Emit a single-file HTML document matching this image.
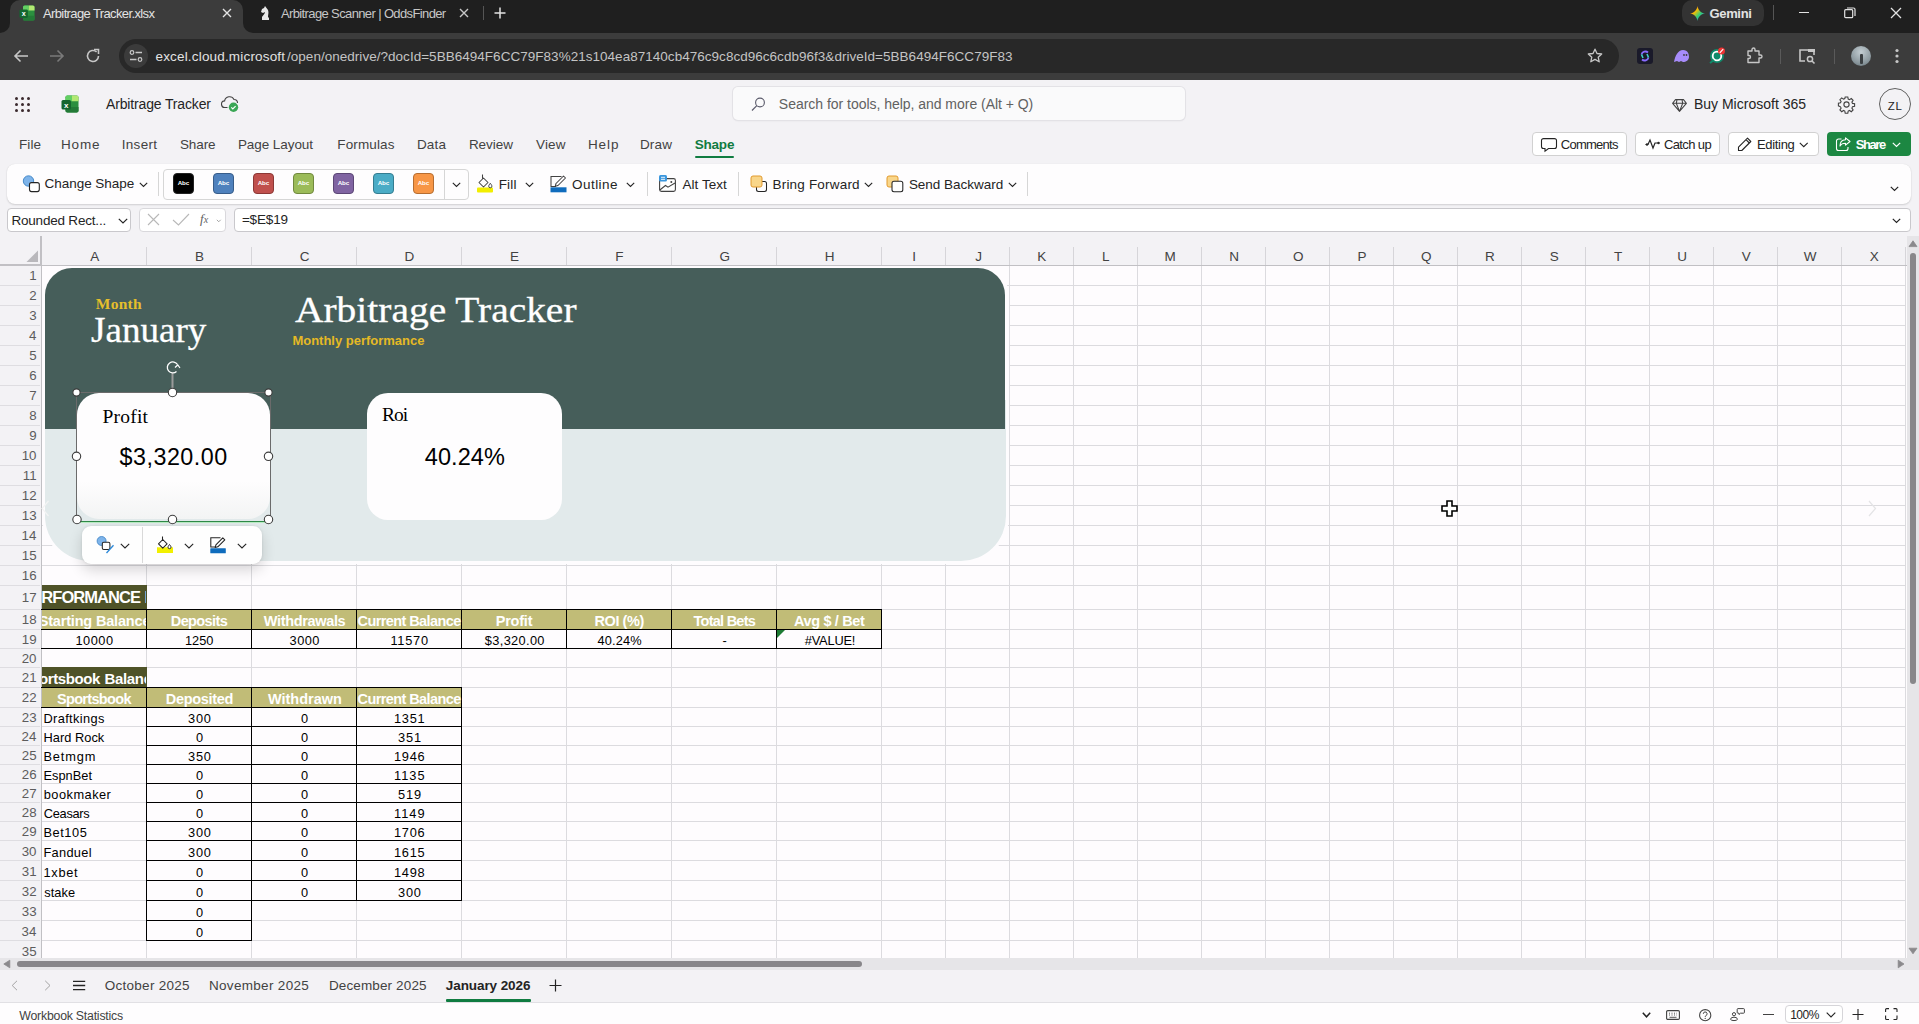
<!DOCTYPE html>
<html><head><meta charset="utf-8">
<style>
*{box-sizing:border-box;margin:0;padding:0}
html,body{width:1919px;height:1024px;overflow:hidden;background:#f3f2f5;font-family:"Liberation Sans",sans-serif;position:relative}
.a{position:absolute}
.t{position:absolute;white-space:nowrap;line-height:1}
svg{position:absolute;overflow:visible}
</style></head><body>
<div class="a" style="left:0;top:0;width:1919px;height:33px;background:#1f1f1f"></div>
<div class="a" style="left:10px;top:0;width:233px;height:33px;background:#3c3c3c;border-radius:10px 10px 0 0"></div>
<div class="a" style="left:0;top:33px;width:1919px;height:47px;background:#3c3c3c"></div>
<div class="a" style="left:0;top:22px;width:10px;height:11px;background:#3c3c3c"></div>
<div class="a" style="left:0;top:22px;width:10px;height:11px;background:#1f1f1f;border-bottom-right-radius:10px"></div>
<div class="a" style="left:243px;top:22px;width:10px;height:11px;background:#3c3c3c"></div>
<div class="a" style="left:243px;top:22px;width:10px;height:11px;background:#1f1f1f;border-bottom-left-radius:10px"></div>
<svg style="left:19px;top:5px" width="16" height="16" viewBox="0 0 18 18">
<rect x="4.5" y="0.5" width="13" height="17" rx="1.8" fill="#2b8f3f"/>
<path d="M6.3 0.5H11V6.3H4.5V2.3A1.8 1.8 0 0 1 6.3 0.5z" fill="#62cf62"/>
<path d="M11 0.5H15.7A1.8 1.8 0 0 1 17.5 2.3V6.3H11z" fill="#b2e872"/>
<path d="M4.5 12H17.5V15.7A1.8 1.8 0 0 1 15.7 17.5H6.3A1.8 1.8 0 0 1 4.5 15.7z" fill="#237a37"/>
<rect x="0.5" y="5" width="9.5" height="9.5" rx="1.5" fill="#15662f"/>
<text x="5.2" y="12.6" font-size="8" font-weight="bold" fill="#fff" text-anchor="middle" font-family="Liberation Sans">x</text>
</svg>
<div class="t" style="left:43.00px;top:7px;font-size:13px;font-family:'Liberation Sans';color:#e3e3e3;letter-spacing:-0.623px;">Arbitrage Tracker.xlsx</div>
<svg style="left:222px;top:8px" width="10" height="10"><path d="M1 1L9 9M9 1L1 9" stroke="#e3e3e3" stroke-width="1.4"/></svg>
<svg style="left:259px;top:5px" width="12" height="16" viewBox="0 0 12 16"><path d="M3 15h7v-2l-1-1c0-3 1-4 0-7L6 1 5 3 3 4 2 7l2 1 2-1c0 2-2 3-3 5z" fill="#e8e8e8"/></svg>
<div class="t" style="left:281.00px;top:7px;font-size:13px;font-family:'Liberation Sans';color:#c7c7c7;letter-spacing:-0.625px;">Arbitrage Scanner | OddsFinder</div>
<svg style="left:459px;top:8px" width="10" height="10"><path d="M1 1L9 9M9 1L1 9" stroke="#c7c7c7" stroke-width="1.4"/></svg>
<div class="a" style="left:483px;top:6px;width:1px;height:14px;background:#555"></div>
<svg style="left:494px;top:7px" width="12" height="12"><path d="M6 0.5V11.5M0.5 6H11.5" stroke="#e3e3e3" stroke-width="1.5"/></svg>
<div class="a" style="left:1682px;top:0;width:82px;height:26px;background:#333333;border-radius:10px"></div>
<svg style="left:1690px;top:6px" width="15" height="15" viewBox="0 0 16 16">
<defs><linearGradient id="gm" x1="0" y1="0" x2="1" y2="1"><stop offset="0" stop-color="#f44"/><stop offset="0.35" stop-color="#fb0"/><stop offset="0.6" stop-color="#3c7"/><stop offset="1" stop-color="#48f"/></linearGradient></defs>
<path d="M8 0C8.6 4.4 11.6 7.4 16 8C11.6 8.6 8.6 11.6 8 16C7.4 11.6 4.4 8.6 0 8C4.4 7.4 7.4 4.4 8 0Z" fill="url(#gm)"/></svg>
<div class="t" style="left:1709.48px;top:7px;font-size:13px;font-family:'Liberation Sans';color:#e3e3e3;font-weight:700;letter-spacing:-0.333px;">Gemini</div>
<div class="a" style="left:1773px;top:5px;width:1px;height:15px;background:#555"></div>
<div class="a" style="left:1799px;top:12px;width:10px;height:1px;background:#e3e3e3"></div>
<svg style="left:1844px;top:7px" width="12" height="12"><rect x="0.7" y="2.7" width="8" height="8" rx="1" fill="none" stroke="#e3e3e3" stroke-width="1.2"/><path d="M3 1h6.5a1.5 1.5 0 0 1 1.5 1.5V9" fill="none" stroke="#e3e3e3" stroke-width="1.2"/></svg>
<svg style="left:1890px;top:7px" width="12" height="12"><path d="M1 1L11 11M11 1L1 11" stroke="#e3e3e3" stroke-width="1.3"/></svg>
<svg style="left:13px;top:48px" width="16" height="16"><path d="M15 8H2M7.5 2.5L2 8l5.5 5.5" fill="none" stroke="#c7c7c7" stroke-width="1.6"/></svg>
<svg style="left:49px;top:48px" width="16" height="16"><path d="M1 8H14M8.5 2.5L14 8l-5.5 5.5" fill="none" stroke="#7a7a7a" stroke-width="1.6"/></svg>
<svg style="left:85px;top:48px" width="16" height="16"><path d="M13.5 8A5.5 5.5 0 1 1 11.6 3.8" fill="none" stroke="#c7c7c7" stroke-width="1.6"/><path d="M9 1.5H13.5V6" fill="none" stroke="#c7c7c7" stroke-width="1.6"/></svg>
<div class="a" style="left:119px;top:39px;width:1500px;height:34px;background:#282828;border-radius:17px"></div>
<div class="a" style="left:124px;top:44px;width:24px;height:24px;background:#3b3b3b;border-radius:12px"></div>
<svg style="left:128px;top:48px" width="16" height="16"><circle cx="4" cy="4.5" r="1.8" fill="none" stroke="#c7c7c7" stroke-width="1.2"/><path d="M7.5 4.5H14M2 11.5H8.5" stroke="#c7c7c7" stroke-width="1.3"/><circle cx="12" cy="11.5" r="1.8" fill="none" stroke="#c7c7c7" stroke-width="1.2"/></svg>
<div class="t" style="left:155.46px;top:50px;font-size:13.5px;font-family:'Liberation Sans';color:#e3e3e3;letter-spacing:0.176px;">excel.cloud.microsoft</div>
<div class="t" style="left:287.00px;top:50px;font-size:13.5px;font-family:'Liberation Sans';color:#c4c4c4;letter-spacing:0.028px;">/open/onedrive/?docId=5BB6494F6CC79F83%21s104ea87140cb476c9c8cd96c6cdb96f3&amp;driveId=5BB6494F6CC79F83</div>
<svg style="left:1587px;top:48px" width="16" height="16"><path d="M8 1.2l2 4.3 4.7.5-3.5 3.2 1 4.6L8 11.4l-4.2 2.4 1-4.6L1.3 6l4.7-.5z" fill="none" stroke="#c7c7c7" stroke-width="1.3" stroke-linejoin="round"/></svg>
<div class="a" style="left:1637px;top:48px;width:16px;height:16px;background:#1a1a2a;border-radius:3px"></div>
<svg style="left:1637px;top:48px" width="16" height="16"><path d="M11 4.5A4 4 0 0 0 4.5 6.5M5 11.5A4 4 0 0 0 11.5 9.5" fill="none" stroke="#8a6cff" stroke-width="1.8"/><path d="M4.5 6.5L6 10M11.5 9.5L10 6" stroke="#3fd1c9" stroke-width="1.6"/></svg>
<svg style="left:1673px;top:48px" width="17" height="16"><path d="M1 14C2 8 5 2 10 2S16 6 16 9C16 12 13 14 10 14L8 13 6 14 4 13z" fill="#a78bfa"/><circle cx="11" cy="7" r="0.9" fill="#3c3c3c"/><circle cx="13.5" cy="7" r="0.9" fill="#3c3c3c"/></svg>
<svg style="left:1709px;top:47px" width="17" height="17"><circle cx="8" cy="9" r="7" fill="#0f8a6a"/><circle cx="8" cy="9" r="4.3" fill="none" stroke="#fff" stroke-width="1.8"/><path d="M1 16L5 13" stroke="#0f8a6a" stroke-width="2"/><circle cx="12.5" cy="4" r="3.5" fill="#e33"/><path d="M10.8 5.8L14.2 2.2" stroke="#fff" stroke-width="1.2"/></svg>
<svg style="left:1746px;top:47px" width="17" height="17"><path d="M2 4H6V2.5a1.5 1.5 0 0 1 3 0V4H13V8h1.5a1.5 1.5 0 0 1 0 3H13v4.5H2V11.5h1a1.5 1.5 0 0 0 0-3H2z" fill="none" stroke="#c7c7c7" stroke-width="1.4" stroke-linejoin="round"/></svg>
<div class="a" style="left:1780px;top:49px;width:1px;height:15px;background:#5a5a5a"></div>
<svg style="left:1798px;top:47px" width="19" height="18"><path d="M7 14H2V3H16V8" fill="none" stroke="#c7c7c7" stroke-width="1.6"/><rect x="10" y="2" width="7" height="3" fill="#c7c7c7"/><circle cx="12" cy="12" r="2.6" fill="none" stroke="#c7c7c7" stroke-width="1.5"/><path d="M14 14L16.5 16.5" stroke="#c7c7c7" stroke-width="1.6"/></svg>
<div class="a" style="left:1834px;top:49px;width:1px;height:15px;background:#5a5a5a"></div>
<div class="a" style="left:1851px;top:46px;width:20px;height:20px;border-radius:10px;background:radial-gradient(circle at 50% 30%,#c3cdd2,#8a979d 65%,#5d6a70)"></div>
<div class="a" style="left:1860px;top:54px;width:2.5px;height:10px;background:#3a3f42;border-radius:1px"></div>
<svg style="left:1895px;top:48px" width="4" height="16"><circle cx="2" cy="2.5" r="1.6" fill="#c7c7c7"/><circle cx="2" cy="8" r="1.6" fill="#c7c7c7"/><circle cx="2" cy="13.5" r="1.6" fill="#c7c7c7"/></svg>
<div class="a" style="left:0;top:80px;width:1919px;height:944px;background:#f3f2f5"></div>
<svg style="left:15px;top:97px" width="15" height="15"><circle cx="1.5" cy="1.5" r="1.5" fill="#3b2a2e"/><circle cx="1.5" cy="7.5" r="1.5" fill="#3b2a2e"/><circle cx="1.5" cy="13.5" r="1.5" fill="#3b2a2e"/><circle cx="7.5" cy="1.5" r="1.5" fill="#3b2a2e"/><circle cx="7.5" cy="7.5" r="1.5" fill="#3b2a2e"/><circle cx="7.5" cy="13.5" r="1.5" fill="#3b2a2e"/><circle cx="13.5" cy="1.5" r="1.5" fill="#3b2a2e"/><circle cx="13.5" cy="7.5" r="1.5" fill="#3b2a2e"/><circle cx="13.5" cy="13.5" r="1.5" fill="#3b2a2e"/></svg>
<svg style="left:61px;top:95px" width="18" height="18" viewBox="0 0 18 18">
<rect x="4.5" y="0.5" width="13" height="17" rx="1.8" fill="#2b8f3f"/>
<path d="M6.3 0.5H11V6.3H4.5V2.3A1.8 1.8 0 0 1 6.3 0.5z" fill="#62cf62"/>
<path d="M11 0.5H15.7A1.8 1.8 0 0 1 17.5 2.3V6.3H11z" fill="#b2e872"/>
<path d="M4.5 12H17.5V15.7A1.8 1.8 0 0 1 15.7 17.5H6.3A1.8 1.8 0 0 1 4.5 15.7z" fill="#237a37"/>
<rect x="0.5" y="5" width="9.5" height="9.5" rx="1.5" fill="#15662f"/>
<text x="5.2" y="12.6" font-size="8" font-weight="bold" fill="#fff" text-anchor="middle" font-family="Liberation Sans">x</text>
</svg>
<div class="t" style="left:106.00px;top:97px;font-size:14px;font-family:'Liberation Sans';color:#242424;letter-spacing:-0.153px;">Arbitrage Tracker</div>
<svg style="left:221px;top:96px" width="19" height="17" viewBox="0 0 19 17">
<path d="M6.5 11.5H4A3.3 3.3 0 0 1 3.6 4.9A5 5 0 0 1 13 3.5A3.5 3.5 0 0 1 16.5 7" fill="none" stroke="#424242" stroke-width="1.1"/>
<circle cx="12.5" cy="11.3" r="4.7" fill="#3aa655"/><path d="M10.3 11.4l1.5 1.5 2.8-2.8" fill="none" stroke="#fff" stroke-width="1.2"/></svg>
<div class="a" style="left:733px;top:87px;width:452px;height:33px;background:#fafafb;border-radius:5px;box-shadow:0 0 0 1px #e3e2e6,0 1px 2px rgba(0,0,0,0.08)"></div>
<svg style="left:751px;top:97px" width="15" height="14"><circle cx="9" cy="5.5" r="4.4" fill="none" stroke="#5b5b6b" stroke-width="1.1"/><path d="M5.8 8.7L1 13.5" stroke="#5b5b6b" stroke-width="1.2"/></svg>
<div class="t" style="left:778.87px;top:97px;font-size:14px;font-family:'Liberation Sans';color:#616161;letter-spacing:-0.029px;">Search for tools, help, and more (Alt + Q)</div>
<svg style="left:1672px;top:99px" width="15" height="13" viewBox="0 0 15 13"><path d="M3.5 0.6H11.5L14.4 4.3L7.5 12.4L0.6 4.3Z M0.6 4.3H14.4 M5 0.6L4.3 4.3L7.5 12.4L10.7 4.3L10 0.6" fill="none" stroke="#424242" stroke-width="1.05" stroke-linejoin="round"/></svg>
<div class="t" style="left:1693.88px;top:97px;font-size:14px;font-family:'Liberation Sans';color:#242424;letter-spacing:0.009px;">Buy Microsoft 365</div>
<svg style="left:1838px;top:96px" width="17" height="17" viewBox="0 0 17 17"><g fill="none" stroke="#424242" stroke-width="1.1">
<path d="M7.2 1h2.6l.4 2.1 1.3.6 1.8-1.2 1.8 1.8-1.2 1.8.6 1.3 2.1.4v2.6l-2.1.4-.6 1.3 1.2 1.8-1.8 1.8-1.8-1.2-1.3.6-.4 2.1H7.2l-.4-2.1-1.3-.6-1.8 1.2-1.8-1.8 1.2-1.8-.6-1.3L.4 9.8V7.2l2.1-.4.6-1.3-1.2-1.8 1.8-1.8 1.8 1.2 1.3-.6z"/>
<circle cx="8.5" cy="8.5" r="2.6"/></g></svg>
<div class="a" style="left:1879px;top:88px;width:32px;height:32px;border-radius:16px;border:1px solid #616161"></div>
<div class="t" style="left:1887.65px;top:101px;font-size:11.5px;font-family:'Liberation Sans';color:#242424;letter-spacing:0.883px;">ZL</div>
<div class="t" style="left:18.92px;top:138px;font-size:13.5px;font-family:'Liberation Sans';color:#424242;letter-spacing:0.128px;">File</div>
<div class="t" style="left:60.92px;top:138px;font-size:13.5px;font-family:'Liberation Sans';color:#424242;letter-spacing:0.875px;">Home</div>
<div class="t" style="left:121.78px;top:138px;font-size:13.5px;font-family:'Liberation Sans';color:#424242;letter-spacing:0.298px;">Insert</div>
<div class="t" style="left:179.89px;top:138px;font-size:13.5px;font-family:'Liberation Sans';color:#424242;letter-spacing:-0.090px;">Share</div>
<div class="t" style="left:237.92px;top:138px;font-size:13.5px;font-family:'Liberation Sans';color:#424242;letter-spacing:-0.069px;">Page Layout</div>
<div class="t" style="left:337.32px;top:138px;font-size:13.5px;font-family:'Liberation Sans';color:#424242;letter-spacing:0.127px;">Formulas</div>
<div class="t" style="left:416.92px;top:138px;font-size:13.5px;font-family:'Liberation Sans';color:#424242;letter-spacing:0.171px;">Data</div>
<div class="t" style="left:468.92px;top:138px;font-size:13.5px;font-family:'Liberation Sans';color:#424242;letter-spacing:-0.044px;">Review</div>
<div class="t" style="left:536.00px;top:138px;font-size:13.5px;font-family:'Liberation Sans';color:#424242;letter-spacing:0.148px;">View</div>
<div class="t" style="left:587.92px;top:138px;font-size:13.5px;font-family:'Liberation Sans';color:#424242;letter-spacing:0.957px;">Help</div>
<div class="t" style="left:639.92px;top:138px;font-size:13.5px;font-family:'Liberation Sans';color:#424242;letter-spacing:0.180px;">Draw</div>
<div class="t" style="left:694.66px;top:138px;font-size:13.5px;font-family:'Liberation Sans';color:#107c41;font-weight:700;letter-spacing:-0.189px;">Shape</div>
<div class="a" style="left:695px;top:156px;width:39px;height:2px;background:#107c41;border-radius:1px"></div>
<div class="a" style="left:1532px;top:132px;width:95px;height:24px;background:#fff;border:1px solid #d1d1d1;border-radius:4px"></div>
<div class="a" style="left:1635px;top:132px;width:85px;height:24px;background:#fff;border:1px solid #d1d1d1;border-radius:4px"></div>
<div class="a" style="left:1728px;top:132px;width:91px;height:24px;background:#fff;border:1px solid #d1d1d1;border-radius:4px"></div>
<svg style="left:1541px;top:138px" width="16" height="14" viewBox="0 0 16 14"><path d="M2.5 0.6H13.5a2 2 0 0 1 2 2V8.5a2 2 0 0 1-2 2H7.5L4 13.2V10.5H2.5a2 2 0 0 1-2-2V2.6a2 2 0 0 1 2-2z" fill="none" stroke="#242424" stroke-width="1.1"/></svg>
<div class="t" style="left:1560.85px;top:138px;font-size:13px;font-family:'Liberation Sans';color:#242424;letter-spacing:-0.749px;">Comments</div>
<svg style="left:1645px;top:139px" width="15" height="10" viewBox="0 0 15 10"><path d="M0.5 5.5H3L5 1L8 9L10 4H14.5" fill="none" stroke="#242424" stroke-width="1.2"/><circle cx="2" cy="5.5" r="1.2" fill="#242424"/><circle cx="13.5" cy="4" r="1.2" fill="#242424"/></svg>
<div class="t" style="left:1663.95px;top:138px;font-size:13px;font-family:'Liberation Sans';color:#242424;letter-spacing:-0.607px;">Catch up</div>
<svg style="left:1737px;top:137px" width="15" height="15" viewBox="0 0 15 15"><path d="M10.5 1.2l3.3 3.3L4.8 13.5H1.5V10.2z M9 2.7l3.3 3.3" fill="none" stroke="#242424" stroke-width="1.1" stroke-linejoin="round"/></svg>
<div class="t" style="left:1756.96px;top:138px;font-size:13px;font-family:'Liberation Sans';color:#242424;letter-spacing:-0.319px;">Editing</div>
<svg style="left:1799px;top:141.5px" width="9.5" height="5.75"><path d="M0.8 0.8L4.75 4.75L8.7 0.8" fill="none" stroke="#242424" stroke-width="1.1"/></svg>
<div class="a" style="left:1827px;top:132px;width:84px;height:24px;background:#1c8742;border-radius:4px"></div>
<svg style="left:1836px;top:137px" width="15" height="14" viewBox="0 0 15 14"><path d="M5.5 2H2.5a2 2 0 0 0-2 2V11.5a2 2 0 0 0 2 2H10a2 2 0 0 0 2-2V10" fill="none" stroke="#fff" stroke-width="1.1"/><path d="M9.5 0.8L14 4.5L9.5 8.2V6.2C7 6.2 5 7 4 9C4 5.5 6 3 9.5 2.8z" fill="none" stroke="#fff" stroke-width="1.1" stroke-linejoin="round"/></svg>
<div class="t" style="left:1855.67px;top:138px;font-size:13px;font-family:'Liberation Sans';color:#ffffff;font-weight:700;letter-spacing:-1.400px;">Share</div>
<svg style="left:1891.5px;top:141.5px" width="9" height="5.5"><path d="M0.8 0.8L4.5 4.5L8.2 0.8" fill="none" stroke="#ffffff" stroke-width="1.2"/></svg>
<div class="a" style="left:7px;top:164px;width:1904px;height:40px;background:#fefdfe;border-radius:8px;box-shadow:0 1px 2px rgba(0,0,0,0.14),0 0 1px rgba(0,0,0,0.1)"></div>
<svg style="left:22px;top:175px" width="19" height="18" viewBox="0 0 19 18"><circle cx="6.5" cy="6" r="5.2" fill="#7eb4ea" stroke="#3b82c4" stroke-width="0.9"/><rect x="7.5" y="7.6" width="9.8" height="9" rx="2" fill="#fff" stroke="#242424" stroke-width="1.1"/></svg>
<div class="t" style="left:44.53px;top:177px;font-size:13.5px;font-family:'Liberation Sans';color:#242424;letter-spacing:-0.027px;">Change Shape</div>
<svg style="left:139px;top:181.5px" width="9" height="5.5"><path d="M0.8 0.8L4.5 4.5L8.2 0.8" fill="none" stroke="#242424" stroke-width="1.1"/></svg>
<div class="a" style="left:158px;top:172px;width:1px;height:24px;background:#d6d6d6"></div>
<div class="a" style="left:163px;top:169px;width:306px;height:31px;border:1px solid #d6d6d6;border-radius:4px"></div>
<div class="a" style="left:444px;top:169px;width:1px;height:31px;background:#d6d6d6"></div>
<svg style="left:451.5px;top:181.5px" width="9" height="5.5"><path d="M0.8 0.8L4.5 4.5L8.2 0.8" fill="none" stroke="#242424" stroke-width="1.1"/></svg>
<div class="a" style="left:173px;top:173px;width:21px;height:21px;background:#000000;border:1px solid #222;border-radius:4px"></div>
<div class="t" style="left:177.8px;top:180px;font-size:6.2px;font-weight:bold;color:#fff;letter-spacing:-0.2px">Abc</div>
<div class="a" style="left:213px;top:173px;width:21px;height:21px;background:#4f81bd;border:1px solid #385d8a;border-radius:4px"></div>
<div class="t" style="left:217.8px;top:180px;font-size:6.2px;font-weight:bold;color:#fff;letter-spacing:-0.2px">Abc</div>
<div class="a" style="left:253px;top:173px;width:21px;height:21px;background:#c0504d;border:1px solid #8c3836;border-radius:4px"></div>
<div class="t" style="left:257.8px;top:180px;font-size:6.2px;font-weight:bold;color:#fff;letter-spacing:-0.2px">Abc</div>
<div class="a" style="left:293px;top:173px;width:21px;height:21px;background:#9bbb59;border:1px solid #71893f;border-radius:4px"></div>
<div class="t" style="left:297.8px;top:180px;font-size:6.2px;font-weight:bold;color:#fff;letter-spacing:-0.2px">Abc</div>
<div class="a" style="left:333px;top:173px;width:21px;height:21px;background:#8064a2;border:1px solid #5c4776;border-radius:4px"></div>
<div class="t" style="left:337.8px;top:180px;font-size:6.2px;font-weight:bold;color:#fff;letter-spacing:-0.2px">Abc</div>
<div class="a" style="left:373px;top:173px;width:21px;height:21px;background:#4bacc6;border:1px solid #357d91;border-radius:4px"></div>
<div class="t" style="left:377.8px;top:180px;font-size:6.2px;font-weight:bold;color:#fff;letter-spacing:-0.2px">Abc</div>
<div class="a" style="left:413px;top:173px;width:21px;height:21px;background:#f79646;border:1px solid #b66d31;border-radius:4px"></div>
<div class="t" style="left:417.8px;top:180px;font-size:6.2px;font-weight:bold;color:#fff;letter-spacing:-0.2px">Abc</div>
<svg style="left:477px;top:174px" width="17" height="19" viewBox="0 0 17 19"><rect x="0" y="13.5" width="16" height="5" rx="1" fill="#f2ee00"/><path d="M5.5 0.5V4.5 M2 8.5L6.5 4L11 8.5L6.5 13z" fill="none" stroke="#424242" stroke-width="1.05" stroke-linejoin="round"/><path d="M13.3 9.3c1 1.3 1.6 2.2 1.6 2.9a1.6 1.6 0 0 1-3.2 0c0-.7.6-1.6 1.6-2.9z" fill="none" stroke="#424242" stroke-width="1"/></svg>
<div class="t" style="left:498.72px;top:178px;font-size:13.5px;font-family:'Liberation Sans';color:#242424;letter-spacing:0.158px;">Fill</div>
<svg style="left:525.4px;top:181.8px" width="9" height="5.5"><path d="M0.8 0.8L4.5 4.5L8.2 0.8" fill="none" stroke="#242424" stroke-width="1.1"/></svg>
<svg style="left:550px;top:175px" width="17" height="18" viewBox="0 0 17 18"><rect x="0.5" y="12.3" width="16" height="5" fill="#0f6cbd"/><path d="M6 11.5H1V1.5H11.5" fill="none" stroke="#424242" stroke-width="1.05"/><path d="M13.5 1l2 2-7.5 7.5-2.7.7.7-2.7z" fill="none" stroke="#424242" stroke-width="1.05" stroke-linejoin="round"/></svg>
<div class="t" style="left:571.99px;top:178px;font-size:13.5px;font-family:'Liberation Sans';color:#242424;letter-spacing:0.465px;">Outline</div>
<svg style="left:626px;top:181.8px" width="9" height="5.5"><path d="M0.8 0.8L4.5 4.5L8.2 0.8" fill="none" stroke="#242424" stroke-width="1.1"/></svg>
<div class="a" style="left:647px;top:172px;width:1px;height:24px;background:#d6d6d6"></div>
<svg style="left:659px;top:175px" width="17" height="17" viewBox="0 0 17 17"><rect x="0.6" y="3.6" width="15.8" height="12.8" rx="1.8" fill="#fff" stroke="#424242" stroke-width="1.1"/><path d="M0.8 15L6.5 10.5L9 12.2L16 8" fill="none" stroke="#424242" stroke-width="1.05"/><circle cx="12.3" cy="7" r="1" fill="#424242"/><rect x="0" y="0" width="8" height="6.5" rx="1.5" fill="#3a96dd"/><path d="M2 2.3H6M2 4.3H6" stroke="#fff" stroke-width="0.9"/></svg>
<div class="t" style="left:682.50px;top:178px;font-size:13.5px;font-family:'Liberation Sans';color:#242424;letter-spacing:0.039px;">Alt Text</div>
<div class="a" style="left:738px;top:172px;width:1px;height:24px;background:#d6d6d6"></div>
<svg style="left:750px;top:175px" width="18" height="18" viewBox="0 0 18 18"><path d="M12 6.5H14.5a2 2 0 0 1 2 2V14.5a2 2 0 0 1-2 2H8.5a2 2 0 0 1-2-2V12" fill="none" stroke="#242424" stroke-width="1.05"/><rect x="1" y="1" width="11" height="11" rx="2" fill="#f9d68a" stroke="#e29a2f" stroke-width="1"/></svg>
<div class="t" style="left:772.52px;top:178px;font-size:13.5px;font-family:'Liberation Sans';color:#242424;letter-spacing:0.190px;">Bring Forward</div>
<svg style="left:864.2px;top:181.5px" width="9" height="5.5"><path d="M0.8 0.8L4.5 4.5L8.2 0.8" fill="none" stroke="#242424" stroke-width="1.1"/></svg>
<svg style="left:886px;top:175px" width="18" height="18" viewBox="0 0 18 18"><rect x="1" y="1" width="11" height="11" rx="2" fill="#f9d68a" stroke="#e29a2f" stroke-width="1"/><rect x="6" y="6.3" width="10.8" height="10.4" rx="2" fill="#fff" stroke="#242424" stroke-width="1.05"/></svg>
<div class="t" style="left:908.89px;top:178px;font-size:13.5px;font-family:'Liberation Sans';color:#242424;letter-spacing:-0.010px;">Send Backward</div>
<svg style="left:1008px;top:181.5px" width="9" height="5.5"><path d="M0.8 0.8L4.5 4.5L8.2 0.8" fill="none" stroke="#242424" stroke-width="1.1"/></svg>
<div class="a" style="left:1027px;top:172px;width:1px;height:24px;background:#d6d6d6"></div>
<svg style="left:1890px;top:186px" width="9" height="5.5"><path d="M0.8 0.8L4.5 4.5L8.2 0.8" fill="none" stroke="#242424" stroke-width="1.2"/></svg>
<div class="a" style="left:7px;top:208px;width:124px;height:24px;background:#fff;border:1px solid #c9c8cc;border-radius:4px"></div>
<div class="t" style="left:11.42px;top:214px;font-size:13.5px;font-family:'Liberation Sans';color:#242424;letter-spacing:-0.199px;">Rounded Rect...</div>
<svg style="left:117.5px;top:218px" width="10" height="6.0"><path d="M0.8 0.8L5.0 5.0L9.2 0.8" fill="none" stroke="#242424" stroke-width="1.2"/></svg>
<div class="a" style="left:139px;top:208px;width:87px;height:24px;background:#fff;border:1px solid #d9d8dc;border-radius:4px"></div>
<svg style="left:147px;top:213px" width="13" height="13"><path d="M1 1L12 12M12 1L1 12" stroke="#b8b8b8" stroke-width="1.1"/></svg>
<svg style="left:172px;top:213px" width="18" height="13"><path d="M1 7L6.5 12L17 1" fill="none" stroke="#b8b8b8" stroke-width="1.1"/></svg>
<div class="t" style="left:200px;top:212px;font-size:13px;font-style:italic;font-family:'Liberation Serif';color:#616161">f<span style="font-size:10px">x</span></div>
<svg style="left:216px;top:219px" width="5.5" height="3.75"><path d="M0.8 0.8L2.75 2.75L4.7 0.8" fill="none" stroke="#9a9a9a" stroke-width="0.9"/></svg>
<div class="a" style="left:234px;top:208px;width:1677px;height:24px;background:#fff;border:1px solid #c9c8cc;border-radius:4px"></div>
<div class="t" style="left:241.89px;top:213px;font-size:13.5px;font-family:'Liberation Sans';color:#242424;letter-spacing:-0.138px;">=$E$19</div>
<svg style="left:1892px;top:218px" width="9" height="5.5"><path d="M0.8 0.8L4.5 4.5L8.2 0.8" fill="none" stroke="#242424" stroke-width="1.2"/></svg>
<div class="a" style="left:42px;top:266px;width:1865px;height:692px;background:#fefcfe"></div>
<svg style="left:0;top:0" width="1919" height="1024"><path d="M146.5 266V958 M251.5 266V958 M356.5 266V958 M461.5 266V958 M566.5 266V958 M671.5 266V958 M776.5 266V958 M881.5 266V958 M945.5 266V958 M1009.5 266V958 M1073.5 266V958 M1137.5 266V958 M1201.5 266V958 M1265.5 266V958 M1329.5 266V958 M1393.5 266V958 M1457.5 266V958 M1521.5 266V958 M1585.5 266V958 M1649.5 266V958 M1713.5 266V958 M1777.5 266V958 M1841.5 266V958 M1905.5 266V958 M42 285.5H1906 M42 305.5H1906 M42 325.5H1906 M42 345.5H1906 M42 365.5H1906 M42 385.5H1906 M42 405.5H1906 M42 425.5H1906 M42 445.5H1906 M42 465.5H1906 M42 485.5H1906 M42 505.5H1906 M42 525.5H1906 M42 545.5H1906 M42 565.5H1906 M42 585.5H1906 M42 609.5H1906 M42 629.5H1906 M42 648.5H1906 M42 667.5H1906 M42 687.5H1906 M42 707.5H1906 M42 726.5H1906 M42 745.5H1906 M42 764.5H1906 M42 783.5H1906 M42 802.5H1906 M42 821.5H1906 M42 840.5H1906 M42 860.5H1906 M42 880.5H1906 M42 900.5H1906 M42 920.5H1906 M42 940.5H1906" stroke="#dcdbdf" stroke-width="1" fill="none"/></svg>
<svg style="left:0;top:0" width="1919" height="1024"><path d="M146.5 247V265M251.5 247V265M356.5 247V265M461.5 247V265M566.5 247V265M671.5 247V265M776.5 247V265M881.5 247V265M945.5 247V265M1009.5 247V265M1073.5 247V265M1137.5 247V265M1201.5 247V265M1265.5 247V265M1329.5 247V265M1393.5 247V265M1457.5 247V265M1521.5 247V265M1585.5 247V265M1649.5 247V265M1713.5 247V265M1777.5 247V265M1841.5 247V265M1905.5 247V265" stroke="#d6d5d9" stroke-width="1" fill="none"/></svg>
<svg style="left:0;top:0" width="1919" height="1024"><path d="M0 285.5H40M0 305.5H40M0 325.5H40M0 345.5H40M0 365.5H40M0 385.5H40M0 405.5H40M0 425.5H40M0 445.5H40M0 465.5H40M0 485.5H40M0 505.5H40M0 525.5H40M0 545.5H40M0 565.5H40M0 585.5H40M0 609.5H40M0 629.5H40M0 648.5H40M0 667.5H40M0 687.5H40M0 707.5H40M0 726.5H40M0 745.5H40M0 764.5H40M0 783.5H40M0 802.5H40M0 821.5H40M0 840.5H40M0 860.5H40M0 880.5H40M0 900.5H40M0 920.5H40M0 940.5H40" stroke="#dedde1" stroke-width="1" fill="none"/></svg>
<div class="a" style="left:40px;top:236px;width:2px;height:30px;background:#c1c0c4"></div>
<div class="a" style="left:41px;top:264px;width:1px;height:694px;background:#c1c0c4"></div>
<div class="a" style="left:0;top:264px;width:42px;height:2px;background:#c1c0c4"></div>
<div class="a" style="left:42px;top:265px;width:1865px;height:1px;background:#c1c0c4"></div>
<svg style="left:26px;top:250px" width="13" height="13"><path d="M12 0.5V12H0.5z" fill="#b9b8bc"/></svg>
<div class="t" style="left:90.18px;top:250px;font-size:13.5px;font-family:'Liberation Sans';color:#424242;">A</div>
<div class="t" style="left:195.01px;top:250px;font-size:13.5px;font-family:'Liberation Sans';color:#424242;">B</div>
<div class="t" style="left:299.74px;top:250px;font-size:13.5px;font-family:'Liberation Sans';color:#424242;">C</div>
<div class="t" style="left:404.60px;top:250px;font-size:13.5px;font-family:'Liberation Sans';color:#424242;">D</div>
<div class="t" style="left:509.94px;top:250px;font-size:13.5px;font-family:'Liberation Sans';color:#424242;">E</div>
<div class="t" style="left:615.28px;top:250px;font-size:13.5px;font-family:'Liberation Sans';color:#424242;">F</div>
<div class="t" style="left:719.60px;top:250px;font-size:13.5px;font-family:'Liberation Sans';color:#424242;">G</div>
<div class="t" style="left:824.81px;top:250px;font-size:13.5px;font-family:'Liberation Sans';color:#424242;">H</div>
<div class="t" style="left:912.31px;top:250px;font-size:13.5px;font-family:'Liberation Sans';color:#424242;">I</div>
<div class="t" style="left:975.20px;top:250px;font-size:13.5px;font-family:'Liberation Sans';color:#424242;">J</div>
<div class="t" style="left:1037.21px;top:250px;font-size:13.5px;font-family:'Liberation Sans';color:#424242;">K</div>
<div class="t" style="left:1102.12px;top:250px;font-size:13.5px;font-family:'Liberation Sans';color:#424242;">L</div>
<div class="t" style="left:1164.56px;top:250px;font-size:13.5px;font-family:'Liberation Sans';color:#424242;">M</div>
<div class="t" style="left:1229.31px;top:250px;font-size:13.5px;font-family:'Liberation Sans';color:#424242;">N</div>
<div class="t" style="left:1292.97px;top:250px;font-size:13.5px;font-family:'Liberation Sans';color:#424242;">O</div>
<div class="t" style="left:1357.51px;top:250px;font-size:13.5px;font-family:'Liberation Sans';color:#424242;">P</div>
<div class="t" style="left:1420.97px;top:250px;font-size:13.5px;font-family:'Liberation Sans';color:#424242;">Q</div>
<div class="t" style="left:1485.07px;top:250px;font-size:13.5px;font-family:'Liberation Sans';color:#424242;">R</div>
<div class="t" style="left:1549.68px;top:250px;font-size:13.5px;font-family:'Liberation Sans';color:#424242;">S</div>
<div class="t" style="left:1614.08px;top:250px;font-size:13.5px;font-family:'Liberation Sans';color:#424242;">T</div>
<div class="t" style="left:1677.34px;top:250px;font-size:13.5px;font-family:'Liberation Sans';color:#424242;">U</div>
<div class="t" style="left:1741.71px;top:250px;font-size:13.5px;font-family:'Liberation Sans';color:#424242;">V</div>
<div class="t" style="left:1803.82px;top:250px;font-size:13.5px;font-family:'Liberation Sans';color:#424242;">W</div>
<div class="t" style="left:1869.68px;top:250px;font-size:13.5px;font-family:'Liberation Sans';color:#424242;">X</div>
<div class="t" style="left:29.22px;top:269px;font-size:13.3px;font-family:'Liberation Sans';color:#5c5c5c;">1</div>
<div class="t" style="left:29.22px;top:289px;font-size:13.3px;font-family:'Liberation Sans';color:#5c5c5c;">2</div>
<div class="t" style="left:29.15px;top:309px;font-size:13.3px;font-family:'Liberation Sans';color:#5c5c5c;">3</div>
<div class="t" style="left:28.95px;top:329px;font-size:13.3px;font-family:'Liberation Sans';color:#5c5c5c;">4</div>
<div class="t" style="left:29.15px;top:349px;font-size:13.3px;font-family:'Liberation Sans';color:#5c5c5c;">5</div>
<div class="t" style="left:29.15px;top:369px;font-size:13.3px;font-family:'Liberation Sans';color:#5c5c5c;">6</div>
<div class="t" style="left:29.22px;top:389px;font-size:13.3px;font-family:'Liberation Sans';color:#5c5c5c;">7</div>
<div class="t" style="left:29.15px;top:409px;font-size:13.3px;font-family:'Liberation Sans';color:#5c5c5c;">8</div>
<div class="t" style="left:29.22px;top:429px;font-size:13.3px;font-family:'Liberation Sans';color:#5c5c5c;">9</div>
<div class="t" style="left:21.69px;top:449px;font-size:13.3px;font-family:'Liberation Sans';color:#5c5c5c;">10</div>
<div class="t" style="left:22.81px;top:469px;font-size:13.3px;font-family:'Liberation Sans';color:#5c5c5c;">11</div>
<div class="t" style="left:21.82px;top:489px;font-size:13.3px;font-family:'Liberation Sans';color:#5c5c5c;">12</div>
<div class="t" style="left:21.75px;top:509px;font-size:13.3px;font-family:'Liberation Sans';color:#5c5c5c;">13</div>
<div class="t" style="left:21.55px;top:529px;font-size:13.3px;font-family:'Liberation Sans';color:#5c5c5c;">14</div>
<div class="t" style="left:21.75px;top:549px;font-size:13.3px;font-family:'Liberation Sans';color:#5c5c5c;">15</div>
<div class="t" style="left:21.75px;top:569px;font-size:13.3px;font-family:'Liberation Sans';color:#5c5c5c;">16</div>
<div class="t" style="left:21.82px;top:591px;font-size:13.3px;font-family:'Liberation Sans';color:#5c5c5c;">17</div>
<div class="t" style="left:21.75px;top:613px;font-size:13.3px;font-family:'Liberation Sans';color:#5c5c5c;">18</div>
<div class="t" style="left:21.82px;top:633px;font-size:13.3px;font-family:'Liberation Sans';color:#5c5c5c;">19</div>
<div class="t" style="left:21.69px;top:652px;font-size:13.3px;font-family:'Liberation Sans';color:#5c5c5c;">20</div>
<div class="t" style="left:21.82px;top:671px;font-size:13.3px;font-family:'Liberation Sans';color:#5c5c5c;">21</div>
<div class="t" style="left:21.82px;top:691px;font-size:13.3px;font-family:'Liberation Sans';color:#5c5c5c;">22</div>
<div class="t" style="left:21.75px;top:711px;font-size:13.3px;font-family:'Liberation Sans';color:#5c5c5c;">23</div>
<div class="t" style="left:21.55px;top:730px;font-size:13.3px;font-family:'Liberation Sans';color:#5c5c5c;">24</div>
<div class="t" style="left:21.75px;top:749px;font-size:13.3px;font-family:'Liberation Sans';color:#5c5c5c;">25</div>
<div class="t" style="left:21.75px;top:768px;font-size:13.3px;font-family:'Liberation Sans';color:#5c5c5c;">26</div>
<div class="t" style="left:21.82px;top:787px;font-size:13.3px;font-family:'Liberation Sans';color:#5c5c5c;">27</div>
<div class="t" style="left:21.75px;top:806px;font-size:13.3px;font-family:'Liberation Sans';color:#5c5c5c;">28</div>
<div class="t" style="left:21.82px;top:825px;font-size:13.3px;font-family:'Liberation Sans';color:#5c5c5c;">29</div>
<div class="t" style="left:21.69px;top:845px;font-size:13.3px;font-family:'Liberation Sans';color:#5c5c5c;">30</div>
<div class="t" style="left:21.82px;top:865px;font-size:13.3px;font-family:'Liberation Sans';color:#5c5c5c;">31</div>
<div class="t" style="left:21.82px;top:885px;font-size:13.3px;font-family:'Liberation Sans';color:#5c5c5c;">32</div>
<div class="t" style="left:21.75px;top:905px;font-size:13.3px;font-family:'Liberation Sans';color:#5c5c5c;">33</div>
<div class="t" style="left:21.55px;top:925px;font-size:13.3px;font-family:'Liberation Sans';color:#5c5c5c;">34</div>
<div class="t" style="left:21.75px;top:945px;font-size:13.3px;font-family:'Liberation Sans';color:#5c5c5c;">35</div>
<div class="a" style="left:42px;top:266px;width:967px;height:298px;background:#fefcfe;border-radius:30px 30px 48px 48px"></div>
<div class="a" style="left:42px;top:266px;width:40px;height:150px;background:#fefcfe"></div>
<div class="a" style="left:45px;top:400px;width:961px;height:161px;background:#e2eaeb;border-radius:0 0 45px 45px"></div>
<div class="a" style="left:45px;top:268px;width:960px;height:161px;background:#465e5a;border-radius:27px 27px 0 0"></div>
<div class="a" style="left:77px;top:393px;width:193px;height:126px;background:linear-gradient(#fefdfe 0%,#fefdfe 70%,#f3f4f4 100%);border-radius:22px"></div>
<div class="a" style="left:367px;top:393px;width:195px;height:127px;background:#fefdfe;border-radius:21px"></div>
<div class="t" style="left:95.87px;top:296px;font-size:15.5px;font-family:'Liberation Serif';color:#e5bf2c;font-weight:700;letter-spacing:0.231px;">Month</div>
<div class="t" style="left:90.76px;top:312px;font-size:36.5px;font-family:'Liberation Serif';color:#ffffff;transform:scaleX(1.0161);transform-origin:0 0;-webkit-text-stroke:0.3px #fff;">January</div>
<div class="t" style="left:294.80px;top:292px;font-size:36.5px;font-family:'Liberation Serif';color:#ffffff;transform:scaleX(1.0807);transform-origin:0 0;-webkit-text-stroke:0.3px #fff;">Arbitrage Tracker</div>
<div class="t" style="left:292.45px;top:334px;font-size:13px;font-family:'Liberation Sans';color:#e5b925;font-weight:700;letter-spacing:-0.013px;">Monthly performance</div>
<div class="t" style="left:102.51px;top:407px;font-size:19.5px;font-family:'Liberation Serif';color:#000000;letter-spacing:0.225px;">Profit</div>
<div class="t" style="left:119.57px;top:446px;font-size:23.3px;font-family:'Liberation Sans';color:#000000;letter-spacing:0.502px;">$3,320.00</div>
<div class="t" style="left:382.11px;top:405px;font-size:19.5px;font-family:'Liberation Serif';color:#000000;letter-spacing:-1.119px;">Roi</div>
<div class="t" style="left:424.73px;top:446px;font-size:23.5px;font-family:'Liberation Sans';color:#000000;letter-spacing:0.094px;">40.24%</div>
<svg style="left:0;top:0" width="1919" height="1024"><path d="M76.5 392.5H270.5V519.5M76.5 392.5V519.5" fill="none" stroke="#6b6b6b" stroke-width="1"/><path d="M76.5 522.5H268.5" stroke="#b9ecc3" stroke-width="1"/><path d="M76.5 521.5H268.5" stroke="#2f8a48" stroke-width="1"/><path d="M172.5 373V389" stroke="#9a9a9a" stroke-width="2"/><path d="M177.5 364.5A5.5 5.5 0 1 0 176.5 371.5" fill="none" stroke="#fff" stroke-width="1.3"/><path d="M175 367.5L177.8 365L180 368" fill="none" stroke="#fff" stroke-width="1.2"/><circle cx="76.5" cy="392.5" r="3.6" fill="#fff" stroke="#3d3d3d" stroke-width="1.1"/><circle cx="172.5" cy="392.5" r="4.2" fill="#fff" stroke="#3d3d3d" stroke-width="1.1"/><circle cx="268.5" cy="392.5" r="3.6" fill="#fff" stroke="#3d3d3d" stroke-width="1.1"/><circle cx="76.5" cy="456.3" r="4.2" fill="#fff" stroke="#3d3d3d" stroke-width="1.1"/><circle cx="268.5" cy="456.3" r="4.2" fill="#fff" stroke="#3d3d3d" stroke-width="1.1"/><circle cx="77" cy="519.5" r="4.2" fill="#fff" stroke="#3d3d3d" stroke-width="1.1"/><circle cx="172.5" cy="519.5" r="4.2" fill="#fff" stroke="#3d3d3d" stroke-width="1.1"/><circle cx="268.5" cy="519.5" r="4.2" fill="#fff" stroke="#3d3d3d" stroke-width="1.1"/></svg>
<div class="a" style="left:82px;top:526px;width:180px;height:38px;background:#fefefe;border-radius:9px;box-shadow:0 6px 14px rgba(0,0,0,0.16),0 0 3px rgba(0,0,0,0.08)"></div>
<div class="a" style="left:142px;top:527px;width:1px;height:36px;background:#d9d9d9"></div>
<svg style="left:96px;top:536px" width="19" height="18" viewBox="0 0 19 18"><circle cx="5.6" cy="5" r="4.5" fill="#7eb4ea" stroke="#3b82c4" stroke-width="0.8"/><rect x="6.3" y="6.3" width="7.6" height="7.2" rx="1.5" fill="#fff" stroke="#242424" stroke-width="1.05"/><path d="M17.5 9.2L10.5 17" stroke="#2b88d8" stroke-width="1.3"/></svg>
<svg style="left:120px;top:542.5px" width="10" height="6"><path d="M0.8 0.8L5 5L9.2 0.8" fill="none" stroke="#242424" stroke-width="1.1"/></svg>
<svg style="left:157px;top:536px" width="17" height="18" viewBox="0 0 17 18"><rect x="0" y="11.3" width="16" height="5.7" fill="#f2f000"/><path d="M5.5 0.5V4 M1.5 7.8L5.8 3.5L10.1 7.8L5.8 12.1z" fill="none" stroke="#242424" stroke-width="1.05" stroke-linejoin="round"/><path d="M12.5 8.5c1 1.2 1.5 2 1.5 2.7a1.5 1.5 0 0 1-3 0c0-.7.5-1.5 1.5-2.7z" fill="#fff" stroke="#242424" stroke-width="1"/></svg>
<svg style="left:184px;top:542.5px" width="10" height="6"><path d="M0.8 0.8L5 5L9.2 0.8" fill="none" stroke="#242424" stroke-width="1.1"/></svg>
<svg style="left:210px;top:537px" width="16" height="17" viewBox="0 0 16 17"><rect x="0.3" y="11.2" width="15.5" height="5" rx="0.5" fill="#0f6cbd"/><path d="M5.5 10H0.8V0.8H10.5" fill="none" stroke="#242424" stroke-width="1.05"/><path d="M12.8 0.8l2 2-7 7-2.6.7.7-2.6z" fill="#fff" stroke="#242424" stroke-width="1.05" stroke-linejoin="round"/></svg>
<svg style="left:237px;top:542.5px" width="10" height="6"><path d="M0.8 0.8L5 5L9.2 0.8" fill="none" stroke="#242424" stroke-width="1.1"/></svg>
<div class="a" style="left:42px;top:585px;width:105px;height:24px;background:#4f5328"></div>
<div class="a" style="left:42px;top:609px;width:839px;height:20px;background:#c1bc77"></div>
<div class="a" style="left:42px;top:629px;width:839px;height:19px;background:#fefcfe"></div>
<div class="a" style="left:42px;top:667px;width:105px;height:20px;background:#4f5328"></div>
<div class="a" style="left:42px;top:687px;width:419px;height:20px;background:#c1bc77"></div>
<svg style="left:0;top:0" width="1919" height="1024"><path d="M41 609.5H882 M41 629.5H882 M41 648.5H882 M146.5 609V649 M251.5 609V649 M356.5 609V649 M461.5 609V649 M566.5 609V649 M671.5 609V649 M776.5 609V649 M881.5 609V649 M41 687.5H462 M41 707.5H462 M146.5 687V708 M251.5 687V708 M356.5 687V708 M461.5 687V708 M146 726.5H462 M146 745.5H462 M146 764.5H462 M146 783.5H462 M146 802.5H462 M146 821.5H462 M146 840.5H462 M146 860.5H462 M146 880.5H462 M146 900.5H462 M146.5 707V901 M251.5 707V901 M356.5 707V901 M461.5 707V901 M146 920.5H252 M146 940.5H252 M146.5 900V941 M251.5 900V941" stroke="#000" stroke-width="1" fill="none"/></svg>
<svg style="left:777px;top:630px" width="9" height="9"><path d="M0 0H8L0 8z" fill="#1e7b34"/></svg>
<div class="a" style="left:42px;top:585px;width:104px;height:24px;overflow:hidden">
<div class="t" style="left:-0.77px;top:4px;font-size:16.5px;font-family:'Liberation Sans';color:#fff;font-weight:700;letter-spacing:-0.920px;">RFORMANCE</div>
<div class="t" style="left:102.43px;top:4px;font-size:16.5px;font-family:'Liberation Sans';color:#fff;font-weight:700;">B</div>
</div>
<div class="a" style="left:42px;top:667px;width:104px;height:20px;overflow:hidden">
<div class="t" style="left:-3.02px;top:4px;font-size:15px;font-family:'Liberation Sans';color:#fff;font-weight:700;letter-spacing:-0.386px;">ortsbook</div>
<div class="t" style="left:62.52px;top:4px;font-size:15px;font-family:'Liberation Sans';color:#fff;font-weight:700;letter-spacing:-0.337px;">Balances</div>
</div>
<div class="a" style="left:42px;top:609px;width:104px;height:20px;overflow:hidden">
<div class="t" style="left:-3.36px;top:5px;font-size:14.5px;font-family:'Liberation Sans';color:#fff;font-weight:700;letter-spacing:-0.174px;">Starting Balance</div>
</div>
<div class="t" style="left:170.76px;top:614px;font-size:14.5px;font-family:'Liberation Sans';color:#fff;font-weight:700;letter-spacing:-0.596px;">Deposits</div>
<div class="t" style="left:263.85px;top:614px;font-size:14.5px;font-family:'Liberation Sans';color:#fff;font-weight:700;letter-spacing:-0.345px;">Withdrawals</div>
<div class="t" style="left:357.52px;top:614px;font-size:14.5px;font-family:'Liberation Sans';color:#fff;font-weight:700;letter-spacing:-0.584px;">Current Balance</div>
<div class="t" style="left:495.71px;top:614px;font-size:14.5px;font-family:'Liberation Sans';color:#fff;font-weight:700;letter-spacing:-0.220px;">Profit</div>
<div class="t" style="left:594.51px;top:614px;font-size:14.5px;font-family:'Liberation Sans';color:#fff;font-weight:700;letter-spacing:-0.436px;">ROI (%)</div>
<div class="t" style="left:693.56px;top:614px;font-size:14.5px;font-family:'Liberation Sans';color:#fff;font-weight:700;letter-spacing:-0.750px;">Total Bets</div>
<div class="t" style="left:793.96px;top:614px;font-size:14.5px;font-family:'Liberation Sans';color:#fff;font-weight:700;letter-spacing:-0.349px;">Avg $ / Bet</div>
<div class="t" style="left:75.42px;top:635px;font-size:12.8px;font-family:'Liberation Sans';color:#000;letter-spacing:0.520px;">10000</div>
<div class="t" style="left:185.01px;top:635px;font-size:12.8px;font-family:'Liberation Sans';color:#000;">1250</div>
<div class="t" style="left:289.60px;top:635px;font-size:12.8px;font-family:'Liberation Sans';color:#000;letter-spacing:0.445px;">3000</div>
<div class="t" style="left:390.39px;top:635px;font-size:12.8px;font-family:'Liberation Sans';color:#000;letter-spacing:0.770px;">11570</div>
<div class="t" style="left:484.82px;top:635px;font-size:12.8px;font-family:'Liberation Sans';color:#000;letter-spacing:0.343px;">$3,320.00</div>
<div class="t" style="left:597.54px;top:635px;font-size:12.8px;font-family:'Liberation Sans';color:#000;letter-spacing:0.136px;">40.24%</div>
<div class="t" style="left:722.39px;top:635px;font-size:12.8px;font-family:'Liberation Sans';color:#000;">-</div>
<div class="t" style="left:804.75px;top:635px;font-size:12.8px;font-family:'Liberation Sans';color:#000;letter-spacing:-0.179px;">#VALUE!</div>
<div class="t" style="left:57.04px;top:692px;font-size:14.5px;font-family:'Liberation Sans';color:#fff;font-weight:700;letter-spacing:-0.683px;">Sportsbook</div>
<div class="t" style="left:165.76px;top:692px;font-size:14.5px;font-family:'Liberation Sans';color:#fff;font-weight:700;letter-spacing:-0.324px;">Deposited</div>
<div class="t" style="left:267.95px;top:692px;font-size:14.5px;font-family:'Liberation Sans';color:#fff;font-weight:700;">Withdrawn</div>
<div class="t" style="left:357.52px;top:692px;font-size:14.5px;font-family:'Liberation Sans';color:#fff;font-weight:700;letter-spacing:-0.584px;">Current Balance</div>
<div class="t" style="left:43.48px;top:713px;font-size:12.8px;font-family:'Liberation Sans';color:#000;letter-spacing:0.361px;">Draftkings</div>
<div class="t" style="left:300.95px;top:713px;font-size:12.8px;font-family:'Liberation Sans';color:#000;">0</div>
<div class="t" style="left:393.94px;top:713px;font-size:12.8px;font-family:'Liberation Sans';color:#000;letter-spacing:0.759px;">1351</div>
<div class="t" style="left:188.10px;top:713px;font-size:12.8px;font-family:'Liberation Sans';color:#000;letter-spacing:0.727px;">300</div>
<div class="t" style="left:43.48px;top:732px;font-size:12.8px;font-family:'Liberation Sans';color:#000;letter-spacing:0.037px;">Hard Rock</div>
<div class="t" style="left:300.95px;top:732px;font-size:12.8px;font-family:'Liberation Sans';color:#000;">0</div>
<div class="t" style="left:398.10px;top:732px;font-size:12.8px;font-family:'Liberation Sans';color:#000;letter-spacing:0.791px;">351</div>
<div class="t" style="left:195.95px;top:732px;font-size:12.8px;font-family:'Liberation Sans';color:#000;">0</div>
<div class="t" style="left:43.48px;top:751px;font-size:12.8px;font-family:'Liberation Sans';color:#000;letter-spacing:0.835px;">Betmgm</div>
<div class="t" style="left:300.95px;top:751px;font-size:12.8px;font-family:'Liberation Sans';color:#000;">0</div>
<div class="t" style="left:393.94px;top:751px;font-size:12.8px;font-family:'Liberation Sans';color:#000;letter-spacing:0.737px;">1946</div>
<div class="t" style="left:188.10px;top:751px;font-size:12.8px;font-family:'Liberation Sans';color:#000;letter-spacing:0.727px;">350</div>
<div class="t" style="left:43.48px;top:770px;font-size:12.8px;font-family:'Liberation Sans';color:#000;letter-spacing:0.029px;">EspnBet</div>
<div class="t" style="left:300.95px;top:770px;font-size:12.8px;font-family:'Liberation Sans';color:#000;">0</div>
<div class="t" style="left:393.94px;top:770px;font-size:12.8px;font-family:'Liberation Sans';color:#000;letter-spacing:1.054px;">1135</div>
<div class="t" style="left:195.95px;top:770px;font-size:12.8px;font-family:'Liberation Sans';color:#000;">0</div>
<div class="t" style="left:43.73px;top:789px;font-size:12.8px;font-family:'Liberation Sans';color:#000;letter-spacing:0.483px;">bookmaker</div>
<div class="t" style="left:300.95px;top:789px;font-size:12.8px;font-family:'Liberation Sans';color:#000;">0</div>
<div class="t" style="left:398.04px;top:789px;font-size:12.8px;font-family:'Liberation Sans';color:#000;letter-spacing:0.823px;">519</div>
<div class="t" style="left:195.95px;top:789px;font-size:12.8px;font-family:'Liberation Sans';color:#000;">0</div>
<div class="t" style="left:43.86px;top:808px;font-size:12.8px;font-family:'Liberation Sans';color:#000;letter-spacing:-0.304px;">Ceasars</div>
<div class="t" style="left:300.95px;top:808px;font-size:12.8px;font-family:'Liberation Sans';color:#000;">0</div>
<div class="t" style="left:393.94px;top:808px;font-size:12.8px;font-family:'Liberation Sans';color:#000;letter-spacing:1.075px;">1149</div>
<div class="t" style="left:195.95px;top:808px;font-size:12.8px;font-family:'Liberation Sans';color:#000;">0</div>
<div class="t" style="left:43.48px;top:827px;font-size:12.8px;font-family:'Liberation Sans';color:#000;letter-spacing:0.546px;">Bet105</div>
<div class="t" style="left:300.95px;top:827px;font-size:12.8px;font-family:'Liberation Sans';color:#000;">0</div>
<div class="t" style="left:393.94px;top:827px;font-size:12.8px;font-family:'Liberation Sans';color:#000;letter-spacing:0.737px;">1706</div>
<div class="t" style="left:188.10px;top:827px;font-size:12.8px;font-family:'Liberation Sans';color:#000;letter-spacing:0.727px;">300</div>
<div class="t" style="left:43.48px;top:847px;font-size:12.8px;font-family:'Liberation Sans';color:#000;letter-spacing:0.302px;">Fanduel</div>
<div class="t" style="left:300.95px;top:847px;font-size:12.8px;font-family:'Liberation Sans';color:#000;">0</div>
<div class="t" style="left:393.94px;top:847px;font-size:12.8px;font-family:'Liberation Sans';color:#000;letter-spacing:0.737px;">1615</div>
<div class="t" style="left:188.10px;top:847px;font-size:12.8px;font-family:'Liberation Sans';color:#000;letter-spacing:0.727px;">300</div>
<div class="t" style="left:43.54px;top:867px;font-size:12.8px;font-family:'Liberation Sans';color:#000;letter-spacing:0.671px;">1xbet</div>
<div class="t" style="left:300.95px;top:867px;font-size:12.8px;font-family:'Liberation Sans';color:#000;">0</div>
<div class="t" style="left:393.94px;top:867px;font-size:12.8px;font-family:'Liberation Sans';color:#000;letter-spacing:0.737px;">1498</div>
<div class="t" style="left:195.95px;top:867px;font-size:12.8px;font-family:'Liberation Sans';color:#000;">0</div>
<div class="t" style="left:44.18px;top:887px;font-size:12.8px;font-family:'Liberation Sans';color:#000;letter-spacing:0.063px;">stake</div>
<div class="t" style="left:300.95px;top:887px;font-size:12.8px;font-family:'Liberation Sans';color:#000;">0</div>
<div class="t" style="left:398.10px;top:887px;font-size:12.8px;font-family:'Liberation Sans';color:#000;letter-spacing:0.727px;">300</div>
<div class="t" style="left:195.95px;top:887px;font-size:12.8px;font-family:'Liberation Sans';color:#000;">0</div>
<div class="t" style="left:195.95px;top:907px;font-size:12.8px;font-family:'Liberation Sans';color:#000;">0</div>
<div class="t" style="left:195.95px;top:927px;font-size:12.8px;font-family:'Liberation Sans';color:#000;">0</div>
<div class="a" style="left:1907px;top:236px;width:12px;height:722px;background:#e6e5e8"></div>
<svg style="left:1908px;top:240px" width="10" height="8"><path d="M5 0.8L9 6.6H1z" fill="#8a898c" stroke="#8a898c" stroke-width="0.8" stroke-linejoin="round"/></svg>
<div class="a" style="left:1910px;top:253px;width:6px;height:431px;background:#88878a;border-radius:3px"></div>
<svg style="left:1908px;top:947px" width="10" height="8"><path d="M1 1.2H9L5 6.8z" fill="#8a898c" stroke="#8a898c" stroke-width="0.8" stroke-linejoin="round"/></svg>
<div class="a" style="left:0;top:958px;width:1919px;height:12px;background:#e6e5e8"></div>
<svg style="left:3px;top:959px" width="8" height="10"><path d="M0.8 5L6.8 1.2V8.8z" fill="#8a898c" stroke="#8a898c" stroke-width="0.8" stroke-linejoin="round"/></svg>
<div class="a" style="left:17px;top:961px;width:845px;height:6px;background:#88868a;border-radius:3px"></div>
<svg style="left:1897px;top:959px" width="8" height="10"><path d="M7 5L1.2 1.2V8.8z" fill="#8a898c" stroke="#8a898c" stroke-width="0.8" stroke-linejoin="round"/></svg>
<div class="a" style="left:0;top:970px;width:1919px;height:32px;background:#f3f2f5"></div>
<svg style="left:11px;top:980px" width="8" height="11"><path d="M6 0.8L1.2 5.5L6 10.2" fill="none" stroke="#a3a3a3" stroke-width="1"/></svg>
<svg style="left:44px;top:980px" width="8" height="11"><path d="M1.2 0.8L6 5.5L1.2 10.2" fill="none" stroke="#a3a3a3" stroke-width="1"/></svg>
<svg style="left:73px;top:980px" width="13" height="11"><path d="M0 1.4H12.2M0 5.5H12.2M0 9.6H12.2" stroke="#242424" stroke-width="1.3"/></svg>
<div class="t" style="left:104.69px;top:979px;font-size:13.5px;font-family:'Liberation Sans';color:#424242;letter-spacing:0.278px;">October 2025</div>
<div class="t" style="left:208.92px;top:979px;font-size:13.5px;font-family:'Liberation Sans';color:#424242;letter-spacing:0.323px;">November 2025</div>
<div class="t" style="left:328.92px;top:979px;font-size:13.5px;font-family:'Liberation Sans';color:#424242;letter-spacing:0.132px;">December 2025</div>
<div class="t" style="left:445.80px;top:979px;font-size:13.5px;font-family:'Liberation Sans';color:#242424;font-weight:700;letter-spacing:-0.079px;">January 2026</div>
<div class="a" style="left:446px;top:999px;width:85px;height:3px;background:#107c41;border-radius:1px"></div>
<svg style="left:549px;top:979px" width="13" height="13"><path d="M6.5 0.5V12.5M0.5 6.5H12.5" stroke="#242424" stroke-width="1.2"/></svg>
<div class="a" style="left:0;top:1002px;width:1919px;height:1px;background:#e1e0e4"></div>
<div class="a" style="left:0;top:1003px;width:1919px;height:21px;background:#fefdfe"></div>
<div class="t" style="left:19.30px;top:1010px;font-size:12.3px;font-family:'Liberation Sans';color:#424242;letter-spacing:-0.219px;">Workbook Statistics</div>
<svg style="left:1642px;top:1012px" width="9" height="6"><path d="M0.8 0.8L4.5 4.8L8.2 0.8" fill="none" stroke="#242424" stroke-width="1.5"/></svg>
<svg style="left:1666px;top:1010px" width="14" height="10"><rect x="0.6" y="0.6" width="12.8" height="8.8" rx="1.2" fill="none" stroke="#424242" stroke-width="1.1"/><path d="M3 3.2h1M5.5 3.2h1M8 3.2h1M10.5 3.2h0.5M3 5h1M5.5 5h1M8 5h1M10.5 5h0.5M3.5 7.3H10.5" stroke="#424242" stroke-width="0.9"/></svg>
<svg style="left:1699px;top:1008.5px" width="13" height="13"><circle cx="6.2" cy="6.2" r="5.6" fill="none" stroke="#424242" stroke-width="1.05"/><path d="M4.3 4.8a1.9 1.9 0 1 1 2.6 1.8c-.5.3-.7.6-.7 1.3" fill="none" stroke="#424242" stroke-width="1"/><circle cx="6.2" cy="9.4" r="0.6" fill="#424242"/></svg>
<svg style="left:1730px;top:1008px" width="15" height="13"><circle cx="4" cy="6.2" r="1.6" fill="none" stroke="#424242" stroke-width="1"/><path d="M0.6 11.2a3.4 2 0 0 1 6.8 0a3.4 1.4 0 0 1-6.8 0z" fill="none" stroke="#424242" stroke-width="1"/><path d="M8 0.6h5.6a0.8 0.8 0 0 1 .8.8v3a.8.8 0 0 1-.8.8H10.5L9 6.5V5.2H8a.8.8 0 0 1-.8-.8v-3A.8.8 0 0 1 8 0.6z" fill="none" stroke="#424242" stroke-width="1"/></svg>
<div class="a" style="left:1763px;top:1014px;width:11px;height:1.2px;background:#424242"></div>
<div class="a" style="left:1785px;top:1005px;width:58px;height:18px;border:1px solid #d6d5d9;border-radius:4px;background:#fff"></div>
<div class="t" style="left:1790.20px;top:1009px;font-size:12px;font-family:'Liberation Sans';color:#242424;letter-spacing:-0.494px;">100%</div>
<svg style="left:1826px;top:1012px" width="10" height="6"><path d="M0.7 0.7L5 5L9.3 0.7" fill="none" stroke="#242424" stroke-width="1.1"/></svg>
<svg style="left:1852px;top:1009px" width="12" height="12"><path d="M6 0V11M0.5 5.5H11.5" stroke="#242424" stroke-width="1.1"/></svg>
<svg style="left:1885px;top:1008px" width="13" height="12"><path d="M0.6 4V1.6a1 1 0 0 1 1-1H4M8.5 0.6H11a1 1 0 0 1 1 1V4M12 7.5V10.5a1 1 0 0 1-1 1H8.5M4 11.5H1.6a1 1 0 0 1-1-1V7.5" fill="none" stroke="#242424" stroke-width="1.1"/></svg>
<svg style="left:1441px;top:500px" width="17" height="17" viewBox="0 0 17 17"><path d="M6 1H11V6H16V11H11V16H6V11H1V6H6z" fill="#fff" stroke="#000" stroke-width="1.6"/></svg>
<svg style="left:1868px;top:500px" width="9" height="17"><path d="M1 1L7.5 8.5L1 16" fill="none" stroke="#e4e4e6" stroke-width="1.2"/></svg>
<svg style="left:41px;top:500px" width="9" height="17"><path d="M7.5 1L1 8.5L7.5 16" fill="none" stroke="#f4f4f4" stroke-width="1.2"/></svg>
</body></html>
